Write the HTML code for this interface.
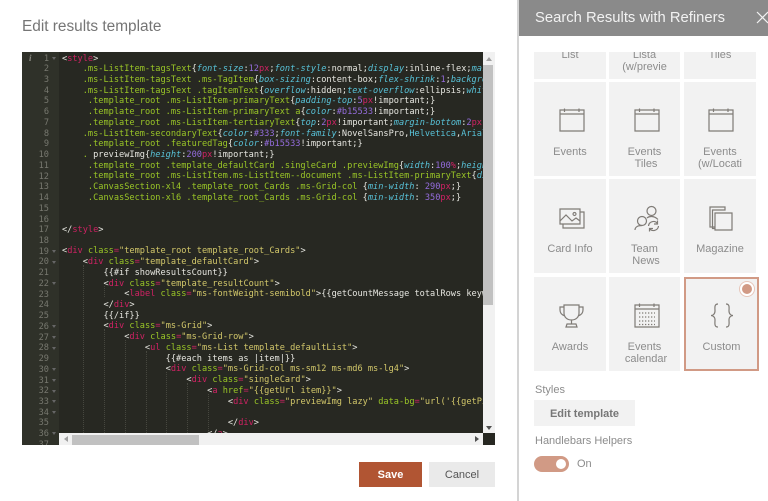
<!DOCTYPE html>
<html><head><meta charset="utf-8"><style>
html,body{margin:0;padding:0;background:#fff;overflow:hidden;width:768px;height:501px}
#p{position:relative;width:768px;height:501px;overflow:hidden;background:#fff;font-family:"Liberation Sans",sans-serif}
.abs{position:absolute}
#title{left:22px;top:17px;font-size:15.4px;line-height:20px;color:#757575}
#ed{left:22px;top:52px;width:473px;height:393px;background:#272822;overflow:hidden}
#gut{left:0;top:0;width:37px;height:393px;background:#2f3129}
#code{left:40px;top:0;width:421px;height:381px;overflow:hidden;font-family:"DejaVu Sans Mono","Liberation Mono",monospace;font-size:8.62px;line-height:10.73px;color:#e6e6e0;padding-top:1.5px}
#code div{height:10.73px;white-space:pre}
#nums{left:0;top:1.5px;width:27px;height:391px;overflow:hidden;text-align:right;font-family:"DejaVu Sans Mono","Liberation Mono",monospace;font-size:8.62px;line-height:10.73px;color:#77786f;white-space:pre}
.s{color:#9ac627}.k{color:#58c2d8;font-style:italic}.n{color:#946cdc}.u{color:#cf2263}.t{color:#cf2263}.a{color:#9ac627}.v{color:#d2c76a}
.g{position:absolute;width:0;border-left:1px dotted #46473f}
.f{position:absolute;left:30px;width:0;height:0;border-left:2.5px solid transparent;border-right:2.5px solid transparent;border-top:3px solid #666}
#vs{left:461px;top:0;width:12px;height:381px;background:#f1f1f1}
#vt{left:461px;top:13px;width:10px;height:240px;background:#c1c1c1}
#hs{left:37px;top:381px;width:424px;height:12px;background:#f1f1f1}
#ht{left:50px;top:383px;width:127px;height:10px;background:#c1c1c1}
#save{left:359px;top:462px;width:63px;height:25px;background:#b15533;color:#fff;font-size:11px;font-weight:bold;text-align:center;line-height:26px}
#cancel{left:429px;top:462px;width:66px;height:25px;background:#eaeaea;color:#555;font-size:11px;text-align:center;line-height:26px}
#panel{left:517px;top:0;width:251px;height:501px;background:#fff;border-left:2px solid #d4d4d4;box-sizing:border-box}
#head{left:519px;top:0;width:249px;height:36px;background:#8a8a8a;color:#f2f2f2;font-size:14.8px;line-height:36px}
.tile{position:absolute;background:#f2f2f2;text-align:center;color:#8c8c8c;font-size:11px;line-height:11.5px;box-sizing:border-box;overflow:hidden}
.tile span{position:absolute;left:0;right:0;top:65px}
.tile svg{position:absolute;left:50%;margin-left:-15px;top:21px;width:30px;height:30px;fill:none;stroke:#7f7b76;stroke-width:1.2;overflow:visible}
#clip{left:534px;top:52px;width:222px;height:30px;overflow:hidden}
</style></head><body><div id="p">
<div class="abs" id="title">Edit results template</div>
<div class="abs" id="ed">
<div class="abs" id="gut"></div>
<div class="abs" id="nums">1
2
3
4
5
6
7
8
9
10
11
12
13
14
15
16
17
18
19
20
21
22
23
24
25
26
27
28
29
30
31
32
33
34
35
36
37</div>
<div class="abs" style="left:7px;top:1px;font-family:'Liberation Serif',serif;font-style:italic;font-size:9px;line-height:10px;color:#8a8a82;font-weight:bold">i</div>
<i class="f" style="top:5px"></i><i class="f" style="top:198px"></i><i class="f" style="top:209px"></i><i class="f" style="top:230px"></i><i class="f" style="top:273px"></i><i class="f" style="top:284px"></i><i class="f" style="top:295px"></i><i class="f" style="top:316px"></i><i class="f" style="top:327px"></i><i class="f" style="top:338px"></i><i class="f" style="top:348px"></i><i class="f" style="top:359px"></i><i class="f" style="top:380px"></i>
<div class="g" style="left:61px;top:213px;height:168px"></div>
<div class="g" style="left:82px;top:234px;height:11px"></div>
<div class="g" style="left:82px;top:277px;height:104px"></div>
<div class="g" style="left:103px;top:288px;height:93px"></div>
<div class="g" style="left:124px;top:299px;height:82px"></div>
<div class="g" style="left:144px;top:320px;height:61px"></div>
<div class="g" style="left:165px;top:331px;height:50px"></div>
<div class="g" style="left:186px;top:342px;height:39px"></div>
<div class="abs" id="code"><div>&lt;<span class="t">style</span>&gt;</div><div>    <span class="s">.ms-ListItem-tagsText</span>{<span class="k">font-size</span>:<span class="n">12</span><span class="u">px</span>;<span class="k">font-style</span>:normal;<span class="k">display</span>:inline-flex;<span class="k">margin</span></div><div>    <span class="s">.ms-ListItem-tagsText .ms-TagItem</span>{<span class="k">box-sizing</span>:content-box;<span class="k">flex-shrink</span>:<span class="n">1</span>;<span class="k">background</span></div><div>    <span class="s">.ms-ListItem-tagsText .tagItemText</span>{<span class="k">overflow</span>:hidden;<span class="k">text-overflow</span>:ellipsis;<span class="k">white-space</span></div><div>     <span class="s">.template_root .ms-ListItem-primaryText</span>{<span class="k">padding-top</span>:<span class="n">5</span><span class="u">px</span>!important;}</div><div>     <span class="s">.template_root .ms-ListItem-primaryText a</span>{<span class="k">color</span>:<span class="n">#b15533</span>!important;}</div><div>     <span class="s">.template_root .ms-ListItem-tertiaryText</span>{<span class="k">top</span>:<span class="n">2</span><span class="u">px</span>!important;<span class="k">margin-bottom</span>:<span class="n">2</span><span class="u">px</span>!important</div><div>    <span class="s">.ms-ListItem-secondaryText</span>{<span class="k">color</span>:<span class="n">#333</span>;<span class="k">font-family</span>:NovelSansPro,<span class="k" style="font-style:normal">Helvetica</span>,<span class="k" style="font-style:normal">Arial</span></div><div>     <span class="s">.template_root .featuredTag</span>{<span class="k">color</span>:<span class="n">#b15533</span>!important;}</div><div>    <span class="s">.</span> previewImg{<span class="k">height</span>:<span class="n">200</span><span class="u">px</span>!important;}</div><div>     <span class="s">.template_root .template_defaultCard .singleCard .previewImg</span>{<span class="k">width</span>:<span class="n">100</span><span class="u">%</span>;<span class="k">height</span></div><div>     <span class="s">.template_root .ms-ListItem.ms-ListItem--document .ms-ListItem-primaryText</span>{<span class="k">display</span></div><div>     <span class="s">.CanvasSection-xl4 .template_root_Cards .ms-Grid-col</span> {<span class="k">min-width</span>: <span class="n">290</span><span class="u">px</span>;}</div><div>     <span class="s">.CanvasSection-xl6 .template_root_Cards .ms-Grid-col</span> {<span class="k">min-width</span>: <span class="n">350</span><span class="u">px</span>;}</div><div> </div><div> </div><div>&lt;/<span class="t">style</span>&gt;</div><div> </div><div>&lt;<span class="t">div</span> <span class="a">class</span><span class="u">=</span><span class="v">"template_root template_root_Cards"</span>&gt;</div><div>    &lt;<span class="t">div</span> <span class="a">class</span><span class="u">=</span><span class="v">"template_defaultCard"</span>&gt;</div><div>        {{#if showResultsCount}}</div><div>        &lt;<span class="t">div</span> <span class="a">class</span><span class="u">=</span><span class="v">"template_resultCount"</span>&gt;</div><div>            &lt;<span class="t">label</span> <span class="a">class</span><span class="u">=</span><span class="v">"ms-fontWeight-semibold"</span>&gt;{{getCountMessage totalRows keyword}}</div><div>        &lt;/<span class="t">div</span>&gt;</div><div>        {{/if}}</div><div>        &lt;<span class="t">div</span> <span class="a">class</span><span class="u">=</span><span class="v">"ms-Grid"</span>&gt;</div><div>            &lt;<span class="t">div</span> <span class="a">class</span><span class="u">=</span><span class="v">"ms-Grid-row"</span>&gt;</div><div>                &lt;<span class="t">ul</span> <span class="a">class</span><span class="u">=</span><span class="v">"ms-List template_defaultList"</span>&gt;</div><div>                    {{#each items as |item|}}</div><div>                    &lt;<span class="t">div</span> <span class="a">class</span><span class="u">=</span><span class="v">"ms-Grid-col ms-sm12 ms-md6 ms-lg4"</span>&gt;</div><div>                        &lt;<span class="t">div</span> <span class="a">class</span><span class="u">=</span><span class="v">"singleCard"</span>&gt;</div><div>                            &lt;<span class="t">a</span> <span class="a">href</span><span class="u">=</span><span class="v">"{{getUrl item}}"</span>&gt;</div><div>                                &lt;<span class="t">div</span> <span class="a">class</span><span class="u">=</span><span class="v">"previewImg lazy"</span> <span class="a">data-bg</span><span class="u">=</span><span class="v">"url('{{getPicture</span></div><div> </div><div>                                &lt;/<span class="t">div</span>&gt;</div><div>                            &lt;/<span class="t">a</span>&gt;</div></div>
<div class="abs" id="vs"></div><div class="abs" id="vt"></div>
<div class="abs" style="left:464px;top:5px;width:0;height:0;border-left:3px solid transparent;border-right:3px solid transparent;border-bottom:4px solid #a0a0a0"></div>
<div class="abs" style="left:464px;top:374px;width:0;height:0;border-left:3px solid transparent;border-right:3px solid transparent;border-top:4px solid #505050"></div>
<div class="abs" id="hs"></div><div class="abs" id="ht"></div>
<div class="abs" style="left:42px;top:384px;width:0;height:0;border-top:3px solid transparent;border-bottom:3px solid transparent;border-right:4px solid #a0a0a0"></div>
<div class="abs" style="left:453px;top:384px;width:0;height:0;border-top:3px solid transparent;border-bottom:3px solid transparent;border-left:4px solid #505050"></div>
</div>
<div class="abs" id="save">Save</div>
<div class="abs" id="cancel">Cancel</div>

<div class="abs" id="panel"></div>
<div class="abs" id="head"><span class="abs" style="left:16px;top:0;white-space:nowrap">Search Results with Refiners</span>
<svg class="abs" style="left:237px;top:11px" width="13" height="13" viewBox="0 0 13 13"><path d="M1 1L12 12M12 1L1 12" stroke="#f2f2f2" stroke-width="1.2" fill="none"/></svg></div>

<div class="abs" id="clip">
<div class="tile" style="left:0;top:0;width:72px;height:27px"><span style="top:-2px">List</span></div>
<div class="tile" style="left:75px;top:0;width:71px;height:27px"><span style="top:-2px">Lista<br>(w/previe</span></div>
<div class="tile" style="left:150px;top:0;width:72px;height:27px"><span style="top:-2px">Tiles</span></div>
</div>

<div class="tile" style="left:534px;top:82px;width:72px;height:94px"><svg viewBox="0 0 30 30"><path d="M5 7H29V28H5ZM5 11H29M9.500 5.500V9M24 5.500V9"/></svg><span>Events</span></div>
<div class="tile" style="left:609px;top:82px;width:71px;height:94px"><svg viewBox="0 0 30 30"><path d="M5 7H29V28H5ZM5 11H29M9.500 5.500V9M24 5.500V9"/></svg><span>Events<br>&nbsp;Tiles</span></div>
<div class="tile" style="left:684px;top:82px;width:72px;height:94px"><svg viewBox="0 0 30 30"><path d="M4 7H28V28H4ZM4 11H28M8.500 5.500V9M23 5.500V9"/></svg><span>Events<br>(w/Locati</span></div>

<div class="tile" style="left:534px;top:179px;width:72px;height:94px"><svg viewBox="0 0 30 30"><path d="M5 9H25V24H5ZM8 24V28H29V12H25M5 21L11 15L17 21L21 18L25 21M19.500 12.500a1.500 1.500 0 1 0 .01 0"/></svg><span>Card Info</span></div>
<div class="tile" style="left:609px;top:179px;width:71px;height:94px"><svg viewBox="0 0 30 30"><circle cx="21.500" cy="11" r="4.500"/><circle cx="12" cy="21" r="4.500"/><path d="M5 30C5 27 8 25.500 12 25.500M17 18C19 16 24 15.500 28 19.500M18.500 26A5 5 0 0 1 27.500 23.500M28.500 26A5 5 0 0 1 19.500 28.500M27.500 20.500V24H24M19.500 31.500V28.500H23"/></svg><span>Team<br>&nbsp;News</span></div>
<div class="tile" style="left:684px;top:179px;width:72px;height:94px"><svg viewBox="0 0 30 30"><path d="M10 13H27V30H10ZM10 27H5V7H20V10H7.500V13M7.500 13V28.500H10"/></svg><span>Magazine</span></div>

<div class="tile" style="left:534px;top:277px;width:72px;height:94px"><svg viewBox="0 0 30 30"><path d="M9 7H24V15C24 19 21 22 16.500 22C12 22 9 19 9 15ZM9 9H5V12C5 15 7 17 10 18M24 9H28V12C28 15 26 17 23 18M16.500 22V26M12 26H21L22 29H11Z"/></svg><span>Awards</span></div>
<div class="tile" style="left:609px;top:277px;width:71px;height:94px"><svg viewBox="0 0 30 30"><path d="M5 7H29V29H5ZM5 11H29M9.500 5.500V9M24 5.500V9"/><path d="M9 15H25M9 19H25M9 23H25M9 26.500H25" stroke-dasharray="1.300 1.700" stroke-width="1.300"/></svg><span>Events<br>&nbsp;calendar</span></div>
<div class="tile" style="left:684px;top:277px;width:75px;height:94px;border:2px solid #d19a85"><svg viewBox="0 0 30 30" style="top:19px"><path d="M11 6C7 6 8 10 8 13C8 16 6 17.500 4 17.500C6 17.500 8 19 8 22C8 25 7 29 11 29M19 6C23 6 22 10 22 13C22 16 24 17.500 26 17.500C24 17.500 22 19 22 22C22 25 23 29 19 29"/></svg><span style="top:63px">Custom</span></div>
<div class="abs" style="left:739px;top:281px;width:16px;height:16px;border-radius:50%;background:#fff;border:1px solid #e6c6ba;box-sizing:border-box"></div>
<div class="abs" style="left:742px;top:284px;width:10px;height:10px;border-radius:50%;background:#d19a85"></div>

<div class="abs" style="left:535px;top:384px;font-size:11px;line-height:13px;color:#8c8c8c">Styles</div>
<div class="abs" style="left:534px;top:400px;width:101px;height:26px;background:#f2f2f2;color:#777;font-size:11px;font-weight:bold;text-align:center;line-height:28px">Edit template</div>
<div class="abs" style="left:535px;top:435px;font-size:11px;line-height:13px;color:#8c8c8c">Handlebars Helpers</div>
<div class="abs" style="left:534px;top:456px;width:35px;height:16px;border-radius:8px;background:#d19a85"></div>
<div class="abs" style="left:556px;top:459px;width:10px;height:10px;border-radius:50%;background:#fff"></div>
<div class="abs" style="left:577px;top:458px;font-size:11px;line-height:13px;color:#8c8c8c">On</div>
</div></body></html>
